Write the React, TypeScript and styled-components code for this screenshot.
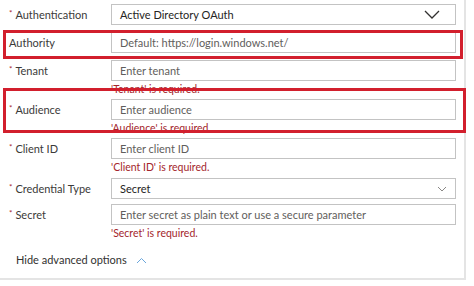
import React from 'react';
import styled, { createGlobalStyle } from 'styled-components';

const GlobalStyle = createGlobalStyle`
  body {
    margin: 0;
    background: #ffffff;
    font-family: Lato, "Noto Sans", sans-serif;
  }
`;

const Panel = styled.div`
  position: relative;
  width: 466px;
  height: 280px;
  padding-top: 4px;
  box-sizing: border-box;
  border-right: 2px solid #e4e4e4;
  border-bottom: 2px solid #e4e4e4;
  background: #fff;
`;

const Form = styled.div`
  display: flex;
  flex-direction: column;
`;

const Row = styled.div<{ $gap: number }>`
  display: grid;
  grid-template-columns: 111px 345px;
  margin-bottom: ${(p) => p.$gap}px;
`;

const Label = styled.div`
  height: 21px;
  display: flex;
  align-items: center;
  padding-left: 9px;
  font-size: 11px;
  color: #3b3a39;
`;

const Star = styled.span`
  color: #a4262c;
  font-size: 8px;
  margin-right: 3px;
  align-self: flex-start;
  margin-top: 4px;
`;

const FieldCol = styled.div`
  display: flex;
  flex-direction: column;
`;

const Field = styled.div<{ $filled?: boolean }>`
  height: 21px;
  box-sizing: border-box;
  border: 1px solid #c3c3c3;
  padding: 0 8px;
  display: flex;
  align-items: center;
  justify-content: space-between;
  font-size: 11px;
  color: ${(p) => (p.$filled ? '#252423' : '#5f5e5c')};
  white-space: nowrap;
`;

const ErrorText = styled.div`
  height: 14px;
  padding-top: 3px;
  box-sizing: border-box;
  line-height: 11px;
  font-size: 10.5px;
  color: #a4262c;
`;

const Toggle = styled.div`
  display: flex;
  align-items: center;
  gap: 9px;
  padding: 14px 0 0 16px;
  line-height: 14px;
  font-size: 11px;
  color: #323130;
`;

const Highlight = styled.div<{ $top: number; $width: number; $height: number }>`
  position: absolute;
  left: 3px;
  top: ${(p) => p.$top}px;
  width: ${(p) => p.$width}px;
  height: ${(p) => p.$height}px;
  box-sizing: border-box;
  border: 3px solid #d21f2d;
  pointer-events: none;
`;

const ChevronDown = ({ big }: { big?: boolean }) =>
  big ? (
    <svg width="16" height="9" viewBox="0 0 16 9" style={{ marginRight: 7 }}>
      <path d="M1 1 L8 8 L15 1" fill="none" stroke="#323130" strokeWidth="1.3" />
    </svg>
  ) : (
    <svg width="10" height="6" viewBox="0 0 10 6">
      <path d="M1 1 L5 5 L9 1" fill="none" stroke="#8a8886" strokeWidth="1" />
    </svg>
  );

type FieldRow = {
  label: string;
  required?: boolean;
  text: string;
  filled?: boolean;
  error?: string;
  select?: 'big' | 'small';
  gap: number;
};

const rows: FieldRow[] = [
  { label: 'Authentication', required: true, text: 'Active Directory OAuth', filled: true, select: 'big', gap: 7 },
  { label: 'Authority', text: 'Default: https://login.windows.net/', gap: 7 },
  { label: 'Tenant', required: true, text: 'Enter tenant', error: "'Tenant' is required.", gap: 4 },
  { label: 'Audience', required: true, text: 'Enter audience', error: "'Audience' is required.", gap: 4 },
  { label: 'Client ID', required: true, text: 'Enter client ID', error: "'Client ID' is required.", gap: 5 },
  { label: 'Credential Type', required: true, text: 'Secret', filled: true, select: 'small', gap: 5 },
  {
    label: 'Secret',
    required: true,
    text: 'Enter secret as plain text or use a secure parameter',
    error: "'Secret' is required.",
    gap: 0,
  },
];

const App: React.FC = () => {
  return (
    <Panel>
      <GlobalStyle />
      <Form>
        {rows.map((r) => (
          <Row key={r.label} $gap={r.gap}>
            <Label>
              {r.required && <Star>*</Star>}
              {r.label}
            </Label>
            <FieldCol>
              <Field $filled={r.filled}>
                <span>{r.text}</span>
                {r.select && <ChevronDown big={r.select === 'big'} />}
              </Field>
              {r.error && <ErrorText>{r.error}</ErrorText>}
            </FieldCol>
          </Row>
        ))}
      </Form>
      <Toggle>
        Hide advanced options
        <svg width="11" height="7" viewBox="0 0 11 7">
          <path d="M1 6 L5.5 1.5 L10 6" fill="none" stroke="#6aa6dc" strokeWidth="1" />
        </svg>
      </Toggle>

      <Highlight $top={30} $width={460} $height={29} />
      <Highlight $top={88} $width={463} $height={45} />
    </Panel>
  );
};

export default App;
